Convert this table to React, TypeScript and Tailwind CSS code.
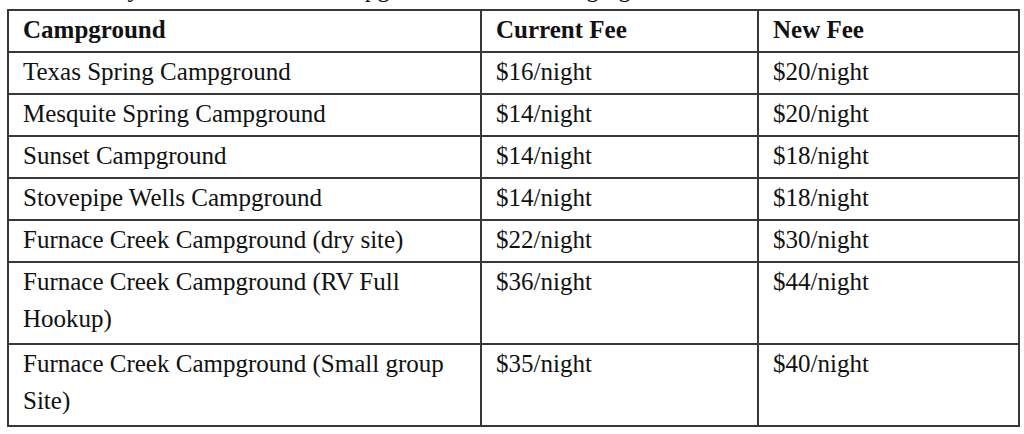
import React from 'react';

type Row = { name: string[]; current: string; next: string; tall?: boolean };

const ROWS: Row[] = [
  { name: ['Texas Spring Campground'], current: '$16/night', next: '$20/night' },
  { name: ['Mesquite Spring Campground'], current: '$14/night', next: '$20/night' },
  { name: ['Sunset Campground'], current: '$14/night', next: '$18/night' },
  { name: ['Stovepipe Wells Campground'], current: '$14/night', next: '$18/night' },
  { name: ['Furnace Creek Campground (dry site)'], current: '$22/night', next: '$30/night' },
  { name: ['Furnace Creek Campground (RV Full', 'Hookup)'], current: '$36/night', next: '$44/night', tall: true },
  { name: ['Furnace Creek Campground (Small group', 'Site)'], current: '$35/night', next: '$40/night', tall: true },
];

const cell = 'border-2 border-[#383838] px-[14px] pt-0 pb-0 align-top text-left';

export default function App() {
  return (
    <div
      className="h-[434px] w-[1024px] overflow-hidden bg-white pl-[7px] text-[25px] leading-[37px] text-[#111]"
      style={{ fontFamily: '"Liberation Serif", "Times New Roman", serif' }}
    >
      {/* sentence above the table, scrolled mostly out of view */}
      <p className="-mt-[30px] h-[39px] whitespace-nowrap pl-[1px]">
        Fees at many of the monument campgrounds will be changing as follows:
      </p>
      <table className="w-[1011px] table-fixed border-collapse">
        <colgroup>
          <col className="w-[473px]" />
          <col className="w-[277px]" />
          <col className="w-[261px]" />
        </colgroup>
        <thead>
          <tr className="h-[42px]">
            <th className={`${cell} font-bold`}>Campground</th>
            <th className={`${cell} font-bold`}>Current Fee</th>
            <th className={`${cell} font-bold`}>New Fee</th>
          </tr>
        </thead>
        <tbody>
          {ROWS.map((r) => (
            <tr key={r.name.join(' ')} className={r.tall ? 'h-[82px]' : 'h-[42px]'}>
              <td className={`${cell} font-normal`}>
                {r.name.map((line, i) => (
                  <div key={i}>{line}</div>
                ))}
              </td>
              <td className={`${cell} font-normal`}>{r.current}</td>
              <td className={`${cell} font-normal`}>{r.next}</td>
            </tr>
          ))}
        </tbody>
      </table>
    </div>
  );
}
